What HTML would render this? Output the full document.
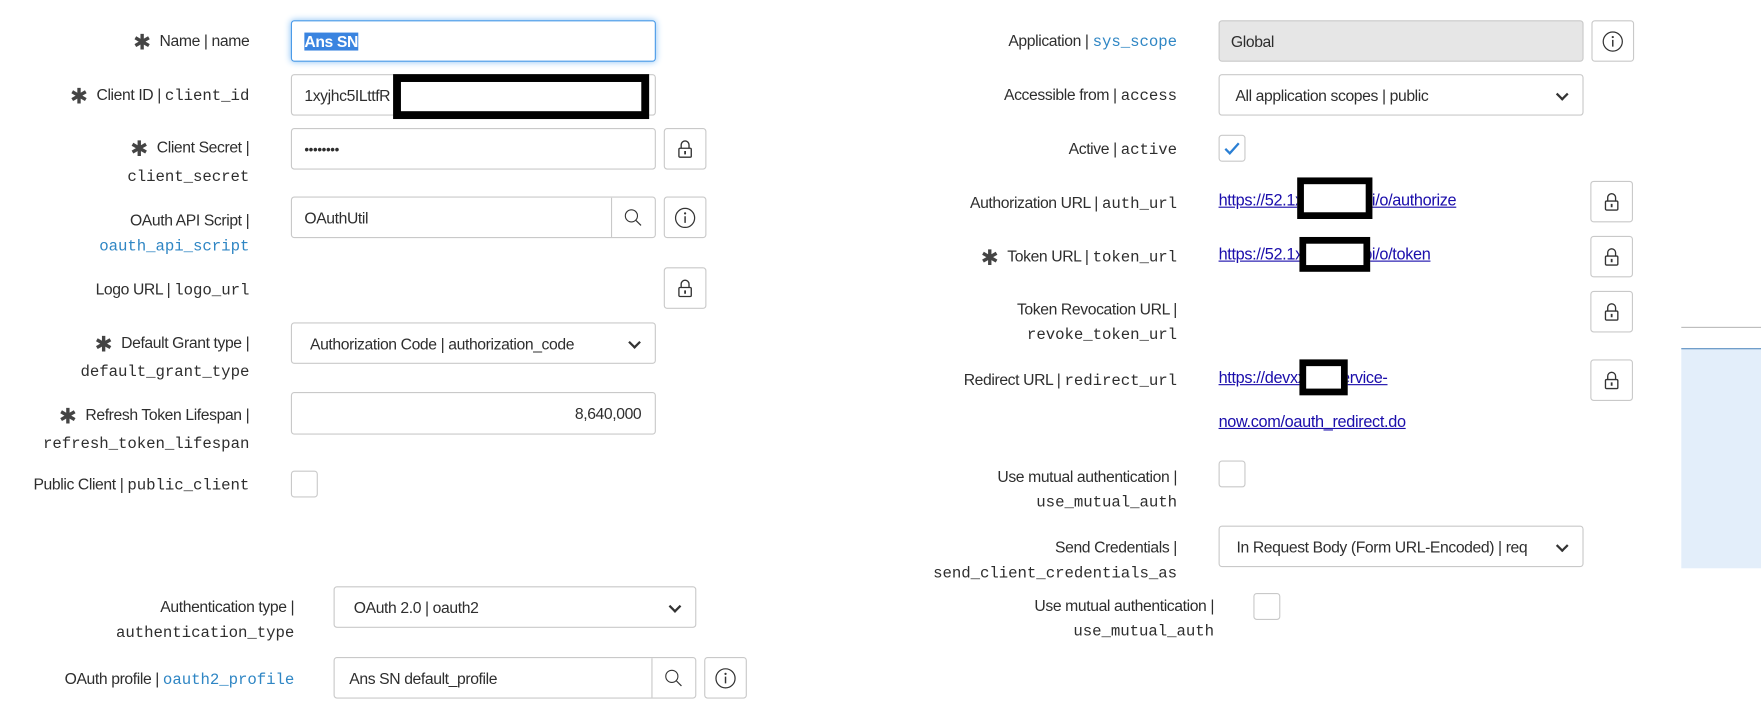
<!DOCTYPE html>
<html><head><meta charset="utf-8"><style>
html,body{margin:0;padding:0;background:#fff;overflow:hidden}
#w{position:absolute;left:0;top:0;width:1568px;height:640px;transform:scale(1.1231);transform-origin:0 0;font-family:"Liberation Sans",sans-serif;color:#2e2e2e;font-size:14px;letter-spacing:-0.35px}
.l{position:absolute;text-align:right;line-height:22px;white-space:nowrap}
.m{font-family:"Liberation Mono",monospace;font-size:14px;letter-spacing:-0.05px}
.b{color:#2f86c4}
.st{font-size:19px;margin-right:8px;vertical-align:-3px;color:#444}
.in{position:absolute;border:1px solid #c9c9c9;border-radius:3px;box-sizing:border-box;background:#fff;line-height:36px;padding-left:11px;white-space:nowrap;overflow:hidden}
.btn{position:absolute;width:38px;height:37px;border:1px solid #c9c9c9;border-radius:3px;box-sizing:border-box;background:#fff;display:flex;align-items:center;justify-content:center}
.cb{position:absolute;width:24px;height:24px;border:1px solid #c9c9c9;border-radius:3px;box-sizing:border-box;background:#fff}
.red{position:absolute;border:7px solid #000;background:#fff;box-sizing:border-box}
a{color:#1a0dab;text-decoration:underline;position:absolute;white-space:nowrap;font-size:14.5px;letter-spacing:-0.3px}
.sel::after{content:"";position:absolute;right:14px;top:13px;width:6px;height:6px;border-right:2px solid #333;border-bottom:2px solid #333;transform:rotate(45deg)}
.srch{position:absolute;right:0;top:0;width:38px;height:100%;border-left:1px solid #c9c9c9;display:flex;align-items:center;justify-content:center}
</style></head><body><div id="w">
<svg width="0" height="0" style="position:absolute"><defs>
<symbol id="lock" viewBox="0 0 16 18"><path d="M4.5 8V5a3.5 3.5 0 0 1 7 0v3" fill="none" stroke="#333" stroke-width="1.2"/><rect x="2.5" y="8" width="11" height="8" rx="1" fill="none" stroke="#333" stroke-width="1.2"/><path d="M8 10.5v3" stroke="#333" stroke-width="1.6"/></symbol>
<symbol id="info" viewBox="0 0 20 20"><circle cx="10" cy="10" r="8.5" fill="none" stroke="#333" stroke-width="1.1"/><circle cx="10" cy="6" r="1" fill="#333"/><path d="M10 8.5v6" stroke="#333" stroke-width="1.3"/></symbol>
<symbol id="mag" viewBox="0 0 20 20"><circle cx="8" cy="8" r="6" fill="none" stroke="#333" stroke-width="1.1"/><path d="M12.5 12.5l5 5" stroke="#333" stroke-width="1.2"/></symbol>
</defs></svg>

<div class="l" style="right:1346px;top:25px"><span class="st">✱</span>Name | name</div>
<div class="in" style="left:259px;top:18px;width:325px;height:37px;border-color:#4b9be8;box-shadow:0 0 6px #8bc2f5"><span style="background:#3a84e0;color:#fff;font-weight:bold">Ans SN</span></div>

<div class="l" style="right:1346px;top:73px"><span class="st">✱</span>Client ID | <span class="m">client_id</span></div>
<div class="in" style="left:259px;top:66px;width:325px;height:37px">1xyjhc5ILttfR</div>
<div class="red" style="left:350px;top:66px;width:228px;height:40px"></div>

<div class="l" style="right:1346px;top:120px"><span class="st">✱</span>Client Secret |<br><span class="m">client_secret</span></div>
<div class="in" style="left:259px;top:114px;width:325px;height:37px;font-size:12px">••••••••</div>
<div class="btn" style="left:591px;top:114px"><svg width="16" height="18"><use href="#lock"/></svg></div>

<div class="l" style="right:1346px;top:185px">OAuth API Script |<br><span class="m b">oauth_api_script</span></div>
<div class="in" style="left:259px;top:175px;width:325px;height:37px">OAuthUtil<div class="srch"><svg width="18" height="18"><use href="#mag"/></svg></div></div>
<div class="btn" style="left:591px;top:175px"><svg width="20" height="20"><use href="#info"/></svg></div>

<div class="l" style="right:1346px;top:246px">Logo URL | <span class="m">logo_url</span></div>
<div class="btn" style="left:591px;top:238px"><svg width="16" height="18"><use href="#lock"/></svg></div>

<div class="l" style="right:1346px;top:294px"><span class="st">✱</span>Default Grant type |<br><span class="m">default_grant_type</span></div>
<div class="in sel" style="left:259px;top:287px;width:325px;height:37px;padding-left:16px">Authorization Code | authorization_code</div>

<div class="l" style="right:1346px;top:358px"><span class="st">✱</span>Refresh Token Lifespan |<br><span class="m">refresh_token_lifespan</span></div>
<div class="in" style="left:259px;top:349px;width:325px;height:38px;text-align:right;padding-right:12px">8,640,000</div>

<div class="l" style="right:1346px;top:420px">Public Client | <span class="m">public_client</span></div>
<div class="cb" style="left:259px;top:419px"></div>

<div class="l" style="right:1306px;top:529px">Authentication type |<br><span class="m">authentication_type</span></div>
<div class="in sel" style="left:297px;top:522px;width:323px;height:37px;padding-left:17px">OAuth 2.0 | oauth2</div>

<div class="l" style="right:1306px;top:593px">OAuth profile | <span class="m b">oauth2_profile</span></div>
<div class="in" style="left:297px;top:585px;width:323px;height:37px;padding-left:13px">Ans SN default_profile<div class="srch"><svg width="18" height="18"><use href="#mag"/></svg></div></div>
<div class="btn" style="left:627px;top:585px"><svg width="20" height="20"><use href="#info"/></svg></div>

<div class="l" style="right:520px;top:25px">Application | <span class="m b">sys_scope</span></div>
<div class="in" style="left:1085px;top:18px;width:325px;height:37px;background:#e6e6e6;padding-left:10px">Global</div>
<div class="btn" style="left:1417px;top:18px"><svg width="20" height="20"><use href="#info"/></svg></div>

<div class="l" style="right:520px;top:73px">Accessible from | <span class="m">access</span></div>
<div class="in sel" style="left:1085px;top:66px;width:325px;height:37px;padding-left:14px">All application scopes | public</div>

<div class="l" style="right:520px;top:121px">Active | <span class="m">active</span></div>
<div class="cb" style="left:1085px;top:120px"><svg width="22" height="22" style="position:absolute;left:0;top:0"><path d="M5 11.5l4 4 8-9" fill="none" stroke="#2a7fd4" stroke-width="2"/></svg></div>

<div class="l" style="right:520px;top:169px">Authorization URL | <span class="m">auth_url</span></div>
<a style="left:1085px;top:171px">https://52.1x.xxx.xx/api/o/authorize</a>
<div class="red" style="left:1155px;top:158px;width:67px;height:37px;border-width:6px"></div>
<div class="btn" style="left:1416px;top:161px"><svg width="16" height="18"><use href="#lock"/></svg></div>

<div class="l" style="right:520px;top:217px"><span class="st">✱</span>Token URL | <span class="m">token_url</span></div>
<a style="left:1085px;top:219px">https://52.1x.xxx.xx/api/o/token</a>
<div class="red" style="left:1157px;top:211px;width:63px;height:31px;border-width:6px"></div>
<div class="btn" style="left:1416px;top:210px"><svg width="16" height="18"><use href="#lock"/></svg></div>

<div class="l" style="right:520px;top:264px">Token Revocation URL |<br><span class="m">revoke_token_url</span></div>
<div class="btn" style="left:1416px;top:259px"><svg width="16" height="18"><use href="#lock"/></svg></div>

<div class="l" style="right:520px;top:327px">Redirect URL | <span class="m">redirect_url</span></div>
<a style="left:1085px;top:329px">https://devxxxxx.service-</a>
<a style="left:1085px;top:368px">now.com/oauth_redirect.do</a>
<div class="red" style="left:1157px;top:320px;width:43px;height:32px;border-width:6px"></div>
<div class="btn" style="left:1416px;top:320px"><svg width="16" height="18"><use href="#lock"/></svg></div>

<div class="l" style="right:520px;top:413px">Use mutual authentication |<br><span class="m">use_mutual_auth</span></div>
<div class="cb" style="left:1085px;top:410px"></div>

<div class="l" style="right:520px;top:476px">Send Credentials |<br><span class="m">send_client_credentials_as</span></div>
<div class="in sel" style="left:1085px;top:468px;width:325px;height:37px;padding-left:15px">In Request Body (Form URL-Encoded) | req</div>

<div class="l" style="right:487px;top:528px">Use mutual authentication |<br><span class="m">use_mutual_auth</span></div>
<div class="cb" style="left:1116px;top:528px"></div>

<div style="position:absolute;left:1497px;top:291px;width:71px;height:1px;background:#bbb"></div>
<div style="position:absolute;left:1497px;top:310px;width:71px;height:195px;background:#e3eefa;border-top:1px solid #5a8fc0"></div>
</div></body></html>
